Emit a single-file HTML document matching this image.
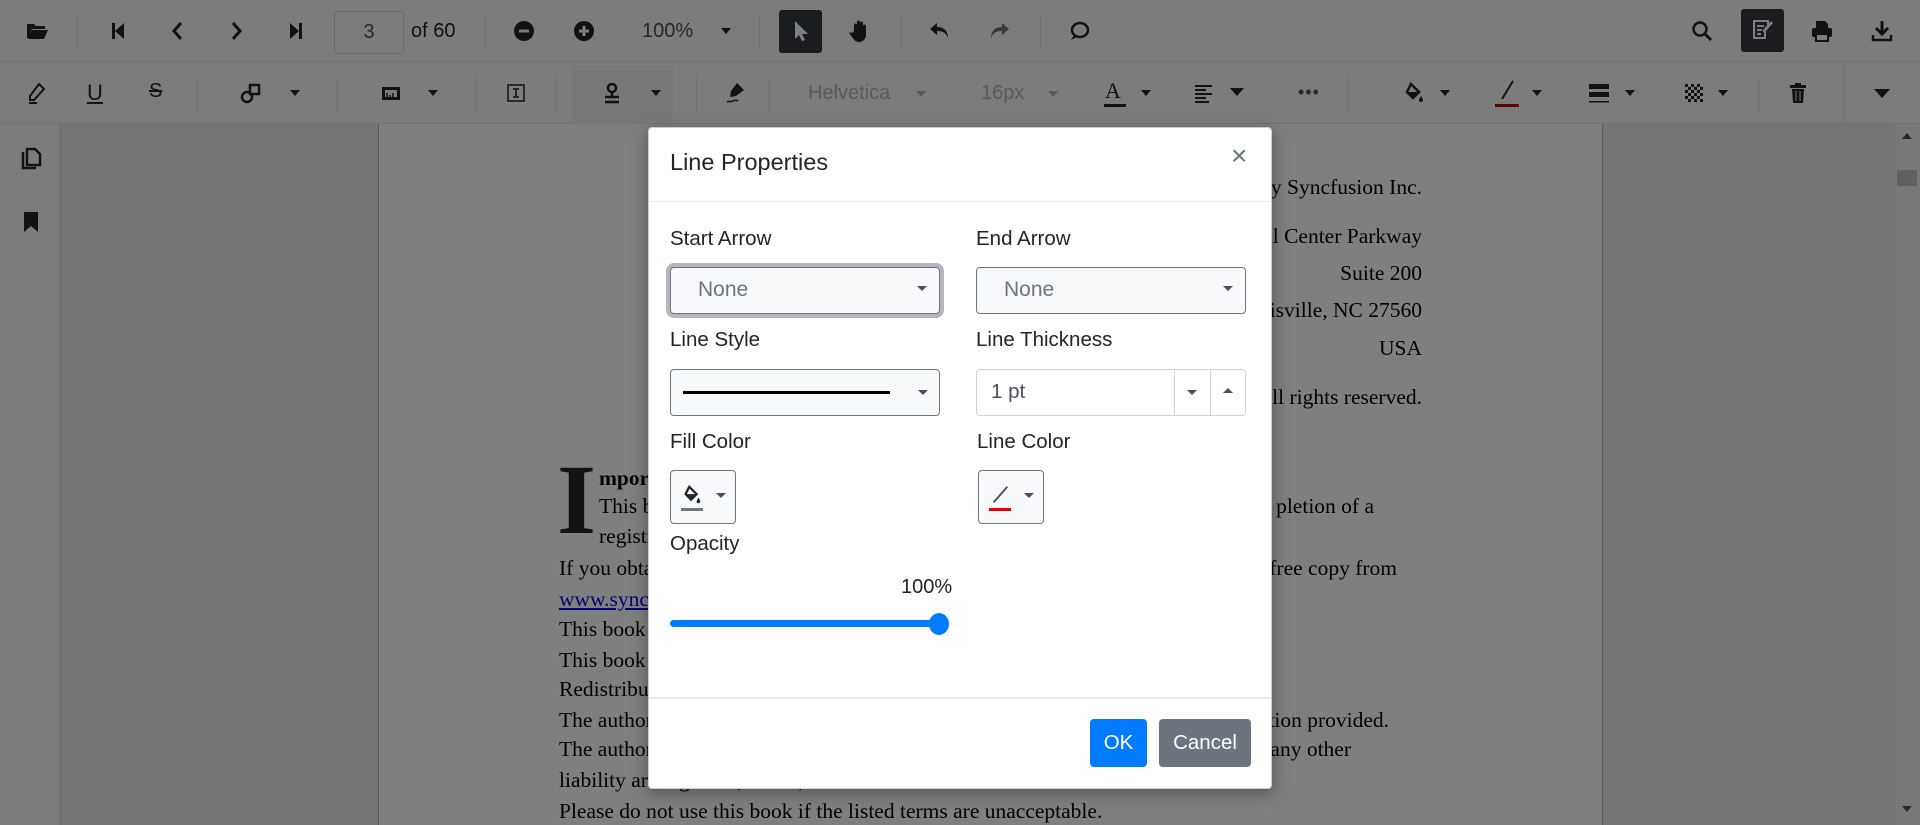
<!DOCTYPE html>
<html><head><meta charset="utf-8"><style>
*{margin:0;padding:0;box-sizing:border-box}
body{width:1920px;height:825px;overflow:hidden;position:relative;background:#e9ecef;font-family:"Liberation Sans",Arial,sans-serif;color:#212529}
.a{position:absolute}
.tb{left:0;width:1920px;background:#f8f9fa;border-bottom:1px solid #dee2e6}
.sep{width:1px;background:#dee2e6}
.ic{width:24px;height:24px}
.car{width:0;height:0;border-left:5px solid transparent;border-right:5px solid transparent;border-top:6px solid #212529}
.pg{font-family:"Liberation Serif","Times New Roman",serif;font-size:21.5px;color:#000;white-space:nowrap;line-height:24px}
.lbl{font-size:20.5px;color:#212529}
.dd{border:1px solid #6c757d;border-radius:4px;background:#f8f9fa}
.dcar{width:0;height:0;border-left:5px solid transparent;border-right:5px solid transparent;border-top:5px solid #495057}
</style></head><body>
<!-- toolbar 1 -->
<div class="a tb" style="top:0;height:62px"></div>
<svg class="a ic" style="left:25px;top:19px" viewBox="0 0 24 24"><path d="M2 5h7l2 2h9v3H7l-3 9H2z" fill="#212529"/><path d="M7 11h16l-4 9H3z" fill="#212529"/></svg>
<div class="a sep" style="left:77px;top:14px;height:34px"></div>
<svg class="a ic" style="left:106px;top:19px" viewBox="0 0 24 24"><rect x="6" y="4" width="3" height="16" fill="#212529"/><path d="M18 4v16l-9-8z" fill="#212529"/></svg>
<svg class="a ic" style="left:166px;top:19px" viewBox="0 0 24 24"><path d="M15 4l-7 8 7 8" stroke="#212529" stroke-width="3" fill="none"/></svg>
<svg class="a ic" style="left:224px;top:19px" viewBox="0 0 24 24"><path d="M9 4l7 8-7 8" stroke="#212529" stroke-width="3" fill="none"/></svg>
<svg class="a ic" style="left:284px;top:19px" viewBox="0 0 24 24"><rect x="15" y="4" width="3" height="16" fill="#212529"/><path d="M6 4v16l9-8z" fill="#212529"/></svg>
<div class="a" style="left:334px;top:11px;width:70px;height:43px;border:1px solid #ced4da;border-radius:3px;background:#f8f9fa;text-align:center;line-height:41px;font-size:20px;color:#495057">3</div>
<div class="a" style="left:411px;top:20px;font-size:20px">of 60</div>
<div class="a sep" style="left:485px;top:14px;height:34px"></div>
<svg class="a ic" style="left:512px;top:19px" viewBox="0 0 24 24"><circle cx="12" cy="12" r="10" fill="#212529"/><rect x="7" y="10.5" width="10" height="3" fill="#f8f9fa"/></svg>
<svg class="a ic" style="left:572px;top:19px" viewBox="0 0 24 24"><circle cx="12" cy="12" r="10" fill="#212529"/><rect x="7" y="10.5" width="10" height="3" fill="#f8f9fa"/><rect x="10.5" y="7" width="3" height="10" fill="#f8f9fa"/></svg>
<div class="a" style="left:642px;top:20px;font-size:20px;color:#495057">100%</div>
<div class="a car" style="left:721px;top:28px"></div>
<div class="a sep" style="left:759px;top:14px;height:34px"></div>
<div class="a" style="left:779px;top:10px;width:43px;height:43px;background:#343a40;border-radius:3px"></div>
<svg class="a ic" style="left:789px;top:19px" viewBox="0 0 24 24"><path d="M6 2v18l4-4 3 6 3-1-3-6h6z" fill="#fff"/></svg>
<svg class="a ic" style="left:848px;top:19px" viewBox="0 0 24 24"><path d="M6 12V6a1.5 1.5 0 013 0v5V3a1.5 1.5 0 013 0v8V4a1.5 1.5 0 013 0v7V7a1.5 1.5 0 013 0v9c0 4-3 7-7 7-3 0-5-2-7-5l-3-4c1-1 2-1 3 0z" fill="#212529"/></svg>
<div class="a sep" style="left:901px;top:14px;height:34px"></div>
<svg class="a ic" style="left:928px;top:19px" viewBox="0 0 24 24"><path d="M9 4L2 10l7 6v-4c6 0 9 2 11 7 0-7-4-11-11-11z" fill="#212529"/></svg>
<svg class="a ic" style="left:987px;top:19px" viewBox="0 0 24 24"><path d="M15 4l7 6-7 6v-4c-6 0-9 2-11 7 0-7 4-11 11-11z" fill="#6c757d"/></svg>
<div class="a sep" style="left:1040px;top:14px;height:34px"></div>
<svg class="a ic" style="left:1067px;top:19px" viewBox="0 0 24 24"><ellipse cx="13" cy="11" rx="8" ry="7" stroke="#212529" stroke-width="2.5" fill="none"/><path d="M7 16l-3 5 6-3" fill="#212529"/></svg>
<svg class="a ic" style="left:1690px;top:19px" viewBox="0 0 24 24"><circle cx="10" cy="10" r="6.5" stroke="#212529" stroke-width="2.5" fill="none"/><path d="M15 15l6 6" stroke="#212529" stroke-width="3"/></svg>
<div class="a" style="left:1741px;top:9px;width:43px;height:43px;background:#343a40;border-radius:3px"></div>
<svg class="a ic" style="left:1751px;top:18px" viewBox="0 0 24 24"><path d="M3 3h14v6l-3 3v8H3z" fill="none" stroke="#fff" stroke-width="2"/><path d="M6 8h7M6 12h5M6 16h4" stroke="#fff" stroke-width="2"/><path d="M20 3l-8 9v2h2l8-9z" fill="#fff"/></svg>
<svg class="a ic" style="left:1810px;top:19px" viewBox="0 0 24 24"><path d="M6 2h9l3 3v4H6z" fill="#212529"/><rect x="2" y="9" width="20" height="9" rx="2" fill="#212529"/><rect x="6" y="15" width="12" height="7" fill="#f8f9fa" stroke="#212529" stroke-width="2"/></svg>
<svg class="a ic" style="left:1870px;top:19px" viewBox="0 0 24 24"><path d="M12 2v12M6 9l6 6 6-6" stroke="#212529" stroke-width="3" fill="none"/><path d="M3 16v5h18v-5" stroke="#212529" stroke-width="2.5" fill="none"/></svg>

<!-- toolbar 2 -->
<div class="a tb" style="top:62px;height:62px"></div>
<svg class="a ic" style="left:25px;top:81px" viewBox="0 0 24 24"><path d="M14 3l5 5-10 11H5v-4z" fill="none" stroke="#212529" stroke-width="2"/><path d="M4 22h8" stroke="#212529" stroke-width="2"/></svg>
<div class="a" style="left:87px;top:80px;font-size:22px;text-decoration:underline;color:#212529">U</div>
<div class="a" style="left:149px;top:80px;font-size:20px;text-decoration:line-through;color:#212529">S</div>
<div class="a sep" style="left:197px;top:76px;height:36px"></div>
<svg class="a ic" style="left:239px;top:81px" viewBox="0 0 24 24"><circle cx="8" cy="16" r="5" stroke="#212529" stroke-width="2.5" fill="none"/><rect x="11" y="4" width="9" height="9" stroke="#212529" stroke-width="2.5" fill="none"/></svg>
<div class="a car" style="left:290px;top:90px"></div>
<div class="a sep" style="left:337px;top:76px;height:36px"></div>
<svg class="a ic" style="left:379px;top:81px" viewBox="0 0 24 24"><rect x="3" y="6" width="18" height="13" fill="#212529"/><rect x="6" y="9" width="12" height="7" fill="#f8f9fa"/><path d="M8 16v-4M11 16v-2M14 16v-4" stroke="#212529" stroke-width="1.5"/></svg>
<div class="a car" style="left:428px;top:90px"></div>
<div class="a sep" style="left:475px;top:76px;height:36px"></div>
<svg class="a ic" style="left:504px;top:81px" viewBox="0 0 24 24"><rect x="4" y="4" width="16" height="16" stroke="#212529" stroke-width="1.5" fill="none"/><path d="M9 8h6M12 8v8M9 16h6" stroke="#212529" stroke-width="1.5"/></svg>
<div class="a sep" style="left:556px;top:76px;height:36px"></div>
<div class="a" style="left:572px;top:66px;width:101px;height:56px;background:#eef0f2"></div>
<svg class="a ic" style="left:600px;top:81px" viewBox="0 0 24 24"><circle cx="12" cy="7" r="4" stroke="#212529" stroke-width="2.5" fill="none"/><path d="M12 11v4M5 16h14M5 21h14" stroke="#212529" stroke-width="2.5"/></svg>
<div class="a car" style="left:651px;top:90px"></div>
<div class="a sep" style="left:696px;top:76px;height:36px"></div>
<svg class="a ic" style="left:723px;top:81px" viewBox="0 0 24 24"><path d="M14 2l7 7-8 6-6 1 1-6z" fill="#212529"/><path d="M4 21c2-2 4 1 6-1s3 1 5-1" stroke="#212529" stroke-width="1.5" fill="none"/></svg>
<div class="a sep" style="left:769px;top:76px;height:36px"></div>
<div class="a" style="left:808px;top:82px;font-size:20px;color:#adb5bd">Helvetica</div>
<div class="a car" style="left:916px;top:91px;border-top-color:#adb5bd"></div>
<div class="a" style="left:981px;top:82px;font-size:20px;color:#adb5bd">16px</div>
<div class="a car" style="left:1048px;top:91px;border-top-color:#adb5bd"></div>
<div class="a" style="left:1105px;top:78px;font-size:22px;color:#212529;font-family:'Liberation Serif',serif">A</div>
<div class="a" style="left:1104px;top:104px;width:22px;height:3px;background:#212529"></div>
<div class="a car" style="left:1141px;top:90px"></div>
<svg class="a ic" style="left:1192px;top:81px" viewBox="0 0 24 24"><path d="M3 5h17M3 9h11M3 13h17M3 17h11M3 21h14" stroke="#212529" stroke-width="2"/></svg>
<div class="a car" style="left:1230px;top:88px;border-width:8px 7px 0 7px"></div>
<div class="a" style="left:1298px;top:82px;font-size:18px;letter-spacing:1px;color:#495057">•••</div>
<div class="a sep" style="left:1347px;top:76px;height:36px"></div>
<svg class="a ic" style="left:1402px;top:81px" viewBox="0 0 24 24"><path d="M9 3l8 8-6 6-6-6z" fill="none" stroke="#212529" stroke-width="2.5"/><path d="M5 11h12l-6 6z" fill="#212529"/><path d="M19 15c0 0 2 3 2 4a2 2 0 01-4 0c0-1 2-4 2-4z" fill="#212529"/></svg>
<div class="a car" style="left:1440px;top:90px"></div>
<svg class="a ic" style="left:1495px;top:79px" viewBox="0 0 24 24"><path d="M18 2L7 20" stroke="#212529" stroke-width="2"/></svg>
<div class="a" style="left:1495px;top:104px;width:24px;height:3px;background:#c00"></div>
<div class="a car" style="left:1532px;top:90px"></div>
<svg class="a ic" style="left:1587px;top:81px" viewBox="0 0 24 24"><rect x="2" y="3" width="20" height="5" fill="#212529"/><rect x="2" y="11" width="20" height="5" fill="#212529"/><rect x="2" y="20" width="20" height="1.5" fill="#212529"/></svg>
<div class="a car" style="left:1625px;top:90px"></div>
<svg class="a ic" style="left:1682px;top:81px" viewBox="0 0 24 24"><g fill="#212529"><rect x="3" y="3" width="3" height="3"/><rect x="9" y="3" width="3" height="3"/><rect x="15" y="3" width="3" height="3"/><rect x="6" y="6" width="3" height="3"/><rect x="12" y="6" width="3" height="3"/><rect x="18" y="6" width="3" height="3"/><rect x="3" y="9" width="3" height="3"/><rect x="9" y="9" width="3" height="3"/><rect x="15" y="9" width="3" height="3"/><rect x="6" y="12" width="3" height="3"/><rect x="12" y="12" width="3" height="3"/><rect x="18" y="12" width="3" height="3"/><rect x="3" y="15" width="3" height="3"/><rect x="9" y="15" width="3" height="3"/><rect x="15" y="15" width="3" height="3"/><rect x="6" y="18" width="3" height="3"/><rect x="12" y="18" width="3" height="3"/><rect x="18" y="18" width="3" height="3"/></g></svg>
<div class="a car" style="left:1718px;top:90px"></div>
<div class="a sep" style="left:1758px;top:76px;height:36px"></div>
<svg class="a ic" style="left:1786px;top:81px" viewBox="0 0 24 24"><rect x="4" y="4" width="16" height="3" fill="#212529"/><rect x="9" y="2" width="6" height="2" fill="#212529"/><path d="M6 8h12l-1 14H7z" fill="#212529"/><path d="M10 10v10M14 10v10" stroke="#f8f9fa" stroke-width="1"/></svg>
<div class="a sep" style="left:1844px;top:62px;height:62px"></div>
<div class="a car" style="left:1874px;top:89px;border-width:9px 8px 0 8px"></div>

<!-- sidebar -->
<div class="a" style="left:0;top:124px;width:61px;height:701px;background:#f8f9fa;border-right:1px solid #ced4da"></div>
<svg class="a ic" style="left:19px;top:147px" viewBox="0 0 24 24"><path d="M4 5v16h13" stroke="#212529" stroke-width="2.5" fill="none"/><path d="M8 2h8l5 5v11H8z" stroke="#212529" stroke-width="2.5" fill="none"/></svg>
<svg class="a ic" style="left:19px;top:210px" viewBox="0 0 24 24"><path d="M5 2h14v20l-7-6-7 6z" fill="#212529"/></svg>

<!-- page -->
<div class="a" style="left:378px;top:124px;width:1225px;height:701px;background:#fff;border-left:1px solid #adb5bd;border-right:1px solid #adb5bd"></div>
<div class="a pg" style="right:498px;top:175px">Copyright © 2001-2024 by Syncfusion Inc.</div>
<div class="a pg" style="right:498px;top:224px">2501 Aerial Center Parkway</div>
<div class="a pg" style="right:498px;top:261px">Suite 200</div>
<div class="a pg" style="right:498px;top:298px">Morrisville, NC 27560</div>
<div class="a pg" style="right:498px;top:336px">USA</div>
<div class="a pg" style="right:498px;top:385px">All rights reserved.</div>
<div class="a" style="left:557px;top:455px;font-family:'Liberation Serif',serif;font-size:100px;line-height:90px;font-weight:bold">I</div>
<div class="a pg" style="left:599px;top:466px;font-weight:bold">mportant licensing information</div>
<div class="a pg" style="left:599px;top:494px">This book is available for free download from www.syncfusion.com on com</div>
<div class="a pg" style="right:546px;top:494px">pletion of a</div>
<div class="a pg" style="left:599px;top:524px">registration form.</div>
<div class="a pg" style="left:559px;top:556px">If you obtained this book from any other source, please register and download a</div>
<div class="a pg" style="right:523px;top:556px">free copy from</div>
<div class="a pg" style="left:559px;top:587px;color:#00e;text-decoration:underline">www.syncfusion.com</div>
<div class="a pg" style="left:559px;top:617px">This book is licensed for reading only if obtained from www.syncfusion.com.</div>
<div class="a pg" style="left:559px;top:648px">This book is licensed strictly for personal or educational use.</div>
<div class="a pg" style="left:559px;top:677px">Redistribution in any form is prohibited.</div>
<div class="a pg" style="left:559px;top:708px">The authors and copyright holders provide absolutely no warranty for any inform</div>
<div class="a pg" style="right:531px;top:708px">ation provided.</div>
<div class="a pg" style="left:559px;top:737px">The authors and copyright holders shall not be liable for any claim, damages, or a</div>
<div class="a pg" style="right:569px;top:737px">any other</div>
<div class="a pg" style="left:559px;top:768px">liability arising from, out of, or in connection with the information in this book.</div>
<div class="a pg" style="left:559px;top:799px">Please do not use this book if the listed terms are unacceptable.</div>

<!-- scrollbar -->
<div class="a" style="left:1895px;top:124px;width:25px;height:701px;background:#f1f1f1"></div>
<div class="a" style="left:1902px;top:133px;width:0;height:0;border-left:5px solid transparent;border-right:5px solid transparent;border-bottom:6px solid #505050"></div>
<div class="a" style="left:1897px;top:170px;width:20px;height:16px;background:#c1c1c1"></div>
<div class="a" style="left:1902px;top:806px;width:0;height:0;border-left:5px solid transparent;border-right:5px solid transparent;border-top:6px solid #505050"></div>

<!-- overlay -->
<div class="a" style="left:0;top:0;width:1920px;height:825px;background:rgba(0,0,0,.5)"></div>

<!-- dialog -->
<div class="a" style="left:648px;top:127px;width:624px;height:662px;background:#fff;border:1px solid rgba(0,0,0,.2);border-radius:4px;box-shadow:0 4px 16px rgba(0,0,0,.35)">
  <div class="a" style="left:21px;top:21px;font-size:23.5px;color:#212529">Line Properties</div>
  <div class="a" style="left:582px;top:12px;font-size:28px;color:#6c757d">×</div>
  <div class="a" style="left:0;top:73px;width:622px;height:1px;background:#e9ecef"></div>

  <div class="a lbl" style="left:21px;top:99px">Start Arrow</div>
  <div class="a lbl" style="left:327px;top:99px">End Arrow</div>
  <div class="a dd" style="left:21px;top:139px;width:270px;height:47px;box-shadow:0 0 0 4px #b3b7bb"></div>
  <div class="a" style="left:49px;top:150px;font-size:21px;color:#6c757d">None</div>
  <div class="a dcar" style="left:268px;top:158px"></div>
  <div class="a dd" style="left:327px;top:139px;width:270px;height:47px"></div>
  <div class="a" style="left:355px;top:150px;font-size:21px;color:#6c757d">None</div>
  <div class="a dcar" style="left:574px;top:158px"></div>

  <div class="a lbl" style="left:21px;top:200px">Line Style</div>
  <div class="a lbl" style="left:327px;top:200px">Line Thickness</div>
  <div class="a dd" style="left:21px;top:241px;width:270px;height:47px"></div>
  <div class="a" style="left:34px;top:263px;width:207px;height:3px;background:#000"></div>
  <div class="a dcar" style="left:269px;top:262px"></div>
  <div class="a" style="left:327px;top:241px;width:270px;height:47px;border:1px solid #ced4da;border-radius:4px;background:#fff"></div>
  <div class="a" style="left:525px;top:242px;width:1px;height:45px;background:#ced4da"></div>
  <div class="a" style="left:561px;top:242px;width:1px;height:45px;background:#ced4da"></div>
  <div class="a" style="left:342px;top:252px;font-size:20.5px;color:#495057">1 pt</div>
  <div class="a dcar" style="left:538px;top:262px"></div>
  <div class="a" style="left:574px;top:260px;width:0;height:0;border-left:5px solid transparent;border-right:5px solid transparent;border-bottom:5px solid #495057"></div>

  <div class="a lbl" style="left:21px;top:302px">Fill Color</div>
  <div class="a lbl" style="left:328px;top:302px">Line Color</div>
  <div class="a dd" style="left:21px;top:342px;width:66px;height:54px"></div>
  <svg class="a" style="left:32px;top:356px" width="22" height="22" viewBox="0 0 24 24"><path d="M9 3l8 8-6 6-6-6z" fill="none" stroke="#212529" stroke-width="2.5"/><path d="M5 11h12l-6 6z" fill="#212529"/><path d="M19 15c0 0 2 3 2 4a2 2 0 01-4 0c0-1 2-4 2-4z" fill="#212529"/></svg>
  <div class="a" style="left:32px;top:380px;width:22px;height:3px;background:#6c757d"></div>
  <div class="a dcar" style="left:67px;top:365px"></div>
  <div class="a dd" style="left:329px;top:342px;width:66px;height:54px"></div>
  <svg class="a" style="left:340px;top:356px" width="22" height="22" viewBox="0 0 24 24"><path d="M20 3L5 20" stroke="#495057" stroke-width="2"/></svg>
  <div class="a" style="left:340px;top:380px;width:22px;height:3px;background:#e00"></div>
  <div class="a dcar" style="left:375px;top:365px"></div>

  <div class="a lbl" style="left:21px;top:404px">Opacity</div>
  <div class="a" style="left:252px;top:448px;font-size:20px;color:#212529">100%</div>
  <div class="a" style="left:21px;top:492px;width:270px;height:7px;border-radius:4px;background:#007bff"></div>
  <div class="a" style="left:280px;top:485px;width:20px;height:22px;border-radius:50%;background:#007bff"></div>

  <div class="a" style="left:0;top:569px;width:622px;height:2px;background:#e9ecef"></div>
  <div class="a" style="left:441px;top:591px;width:57px;height:48px;background:#007bff;border-radius:4px;color:#fff;font-size:20.5px;text-align:center;line-height:48px">OK</div>
  <div class="a" style="left:510px;top:591px;width:92px;height:48px;background:#6c757d;border-radius:4px;color:#fff;font-size:20.5px;text-align:center;line-height:48px">Cancel</div>
</div>
</body></html>
